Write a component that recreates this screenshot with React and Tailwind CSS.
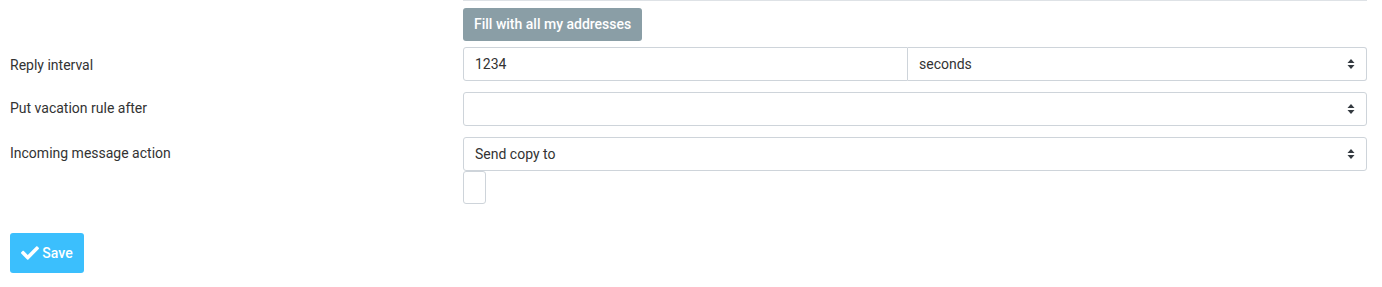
import React from "react";
import { FaCheck } from "react-icons/fa";

function Arrows() {
  return (
    <svg width="8" height="11" viewBox="0 0 8 11" className="absolute right-[11px] top-1/2 -translate-y-1/2">
      <path d="M4 0.5 L7.5 4.5 L0.5 4.5 Z" fill="#343a40" />
      <path d="M4 10.5 L7.5 6.5 L0.5 6.5 Z" fill="#343a40" />
    </svg>
  );
}

function Select({ children, className = "" }) {
  return (
    <div className={"relative h-[34px] border border-[#ced4da] bg-white flex items-center pl-[11px] text-[14px] text-[#333] " + className}>
      <span>{children}</span>
      <Arrows />
    </div>
  );
}

export default function App() {
  return (
    <div className="w-[1382px] h-[287px] bg-white font-['Roboto',sans-serif] text-[14px] text-[#333]">
      <div className="pl-[10px] pr-[15px]">
        <div className="flex">
          <div className="w-[453px]" />
          <div className="flex-1">
            <div className="h-px bg-[#dee2e6]" />
            <div className="pt-[7px]">
              <button className="h-[33px] px-[11px] rounded-[3px] bg-[#8a9ea6] text-white text-[14px] font-medium">
                Fill with all my addresses
              </button>
            </div>
          </div>
        </div>

        <div className="flex mt-[6px] items-start">
          <div className="w-[453px] pt-[8px] leading-[20px]">Reply interval</div>
          <div className="flex-1 flex">
            <div className="w-[445px] h-[34px] border border-[#ced4da] rounded-l-[3px] flex items-center pl-[11px]">1234</div>
            <Select className="flex-1 border-l-0 rounded-r-[3px]">seconds</Select>
          </div>
        </div>

        <div className="flex mt-[11px] items-start">
          <div className="w-[453px] pt-[6px] leading-[20px]">Put vacation rule after</div>
          <div className="flex-1">
            <Select className="rounded-[3px]">{""}</Select>
          </div>
        </div>

        <div className="flex mt-[11px] items-start">
          <div className="w-[453px] pt-[6px] leading-[20px]">Incoming message action</div>
          <div className="flex-1">
            <Select className="rounded-[3px]">Send copy to</Select>
            <div className="w-[23px] h-[33px] border border-[#ced4da] rounded-[3px]" />
          </div>
        </div>

        <div className="mt-[29px]">
          <button className="h-[40px] w-[74px] rounded-[3px] bg-[#3bbffd] text-white flex items-center justify-center gap-[3px] text-[14px] font-medium">
            <FaCheck size={18} />
            <span>Save</span>
          </button>
        </div>
      </div>
    </div>
  );
}
